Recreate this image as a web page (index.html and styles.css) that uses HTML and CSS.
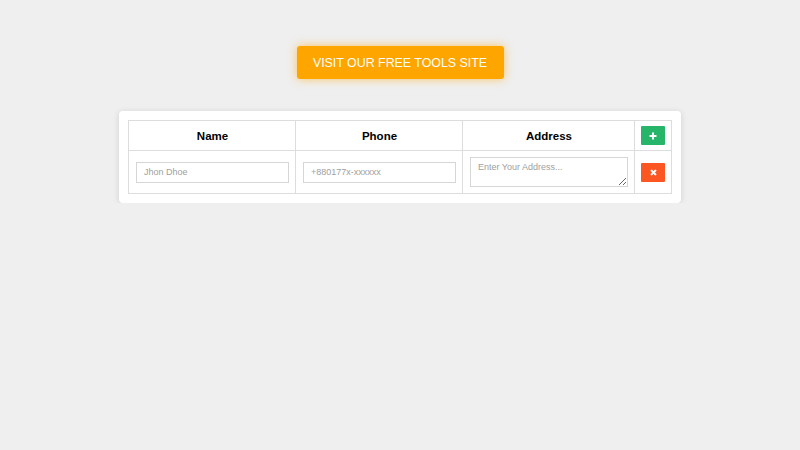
FILE: index.html
```html
<!DOCTYPE html>
<html>
<head>
<meta charset="utf-8">
<link rel="stylesheet" href="styles.css">
</head>
<body>
<div class="top">
  <a class="visit" href="#">VISIT OUR FREE TOOLS SITE</a>
</div>
<div class="card">
  <table class="grid">
    <thead>
      <tr>
        <th class="c1">Name</th>
        <th class="c2">Phone</th>
        <th class="c3">Address</th>
        <th class="c4"><button class="btn add"><svg width="8" height="8" viewBox="0 0 8 8"><path d="M4 0.5V7.5M0.5 4H7.5" stroke="#fff" stroke-width="2"/></svg></button></th>
      </tr>
    </thead>
    <tbody>
      <tr>
        <td><input class="field" type="text" placeholder="Jhon Dhoe"></td>
        <td><input class="field" type="text" placeholder="+880177x-xxxxxx"></td>
        <td><textarea class="area" placeholder="Enter Your Address..."></textarea></td>
        <td class="c4"><button class="btn del"><svg width="7" height="7" viewBox="0 0 7 7"><path d="M1 1L6 6M6 1L1 6" stroke="#fff" stroke-width="1.8"/></svg></button></td>
      </tr>
    </tbody>
  </table>
</div>
</body>
</html>
```
FILE: styles.css
```css
html, body {
  margin: 0;
  padding: 0;
  background: #efefef;
  font-family: "Liberation Sans", Arial, sans-serif;
}
.top {
  display: flex;
  justify-content: center;
  padding-top: 46px;
}
.visit {
  display: flex;
  align-items: center;
  justify-content: center;
  width: 207px;
  height: 33px;
  background: #ffa500;
  color: #fff;
  font-size: 12.4px;
  text-decoration: none;
  border-radius: 3px;
  box-shadow: 0 0 10px rgba(255, 165, 0, 0.6);
}
.card {
  width: 544px;
  margin: 32px auto 0;
  padding: 9px;
  background: #fff;
  border-radius: 4px;
  box-shadow: 0 1px 6px rgba(0, 0, 0, 0.13);
}
.grid {
  width: 543px;
  border-collapse: collapse;
  table-layout: fixed;
}
.grid th, .grid td {
  border: 1px solid #dddddd;
  padding: 0 6px 0 7px;
}
.grid th {
  height: 29px;
  font-size: 11.5px;
  font-weight: bold;
  color: #000;
  text-align: center;
}
.grid td {
  height: 42px;
  vertical-align: middle;
}
.c1, .c2 { width: 153px; }
.c3 { width: 158px; }
.grid .c4 { width: 24px; padding: 0 6px; text-align: center; }
.field {
  display: block;
  box-sizing: border-box;
  width: 100%;
  height: 21px;
  border: 1px solid #d6d6d6;
  padding: 0 7px;
  font-family: "Liberation Sans", Arial, sans-serif;
  font-size: 9px;
  margin: 0;
}
.area {
  display: block;
  box-sizing: border-box;
  width: 100%;
  height: 30px;
  border: 1px solid #d6d6d6;
  padding: 4px 7px;
  font-family: "Liberation Sans", Arial, sans-serif;
  font-size: 9px;
  margin: 0;
  resize: vertical;
}
.field::placeholder, .area::placeholder {
  color: #a0a0a0;
}
.btn {
  display: flex;
  align-items: center;
  justify-content: center;
  width: 24px;
  height: 19px;
  border: none;
  padding: 0;
  margin: 0 auto;
  border-radius: 1px;
}
.add { background: #27b56a; }
.del { background: #fc5722; }
```
